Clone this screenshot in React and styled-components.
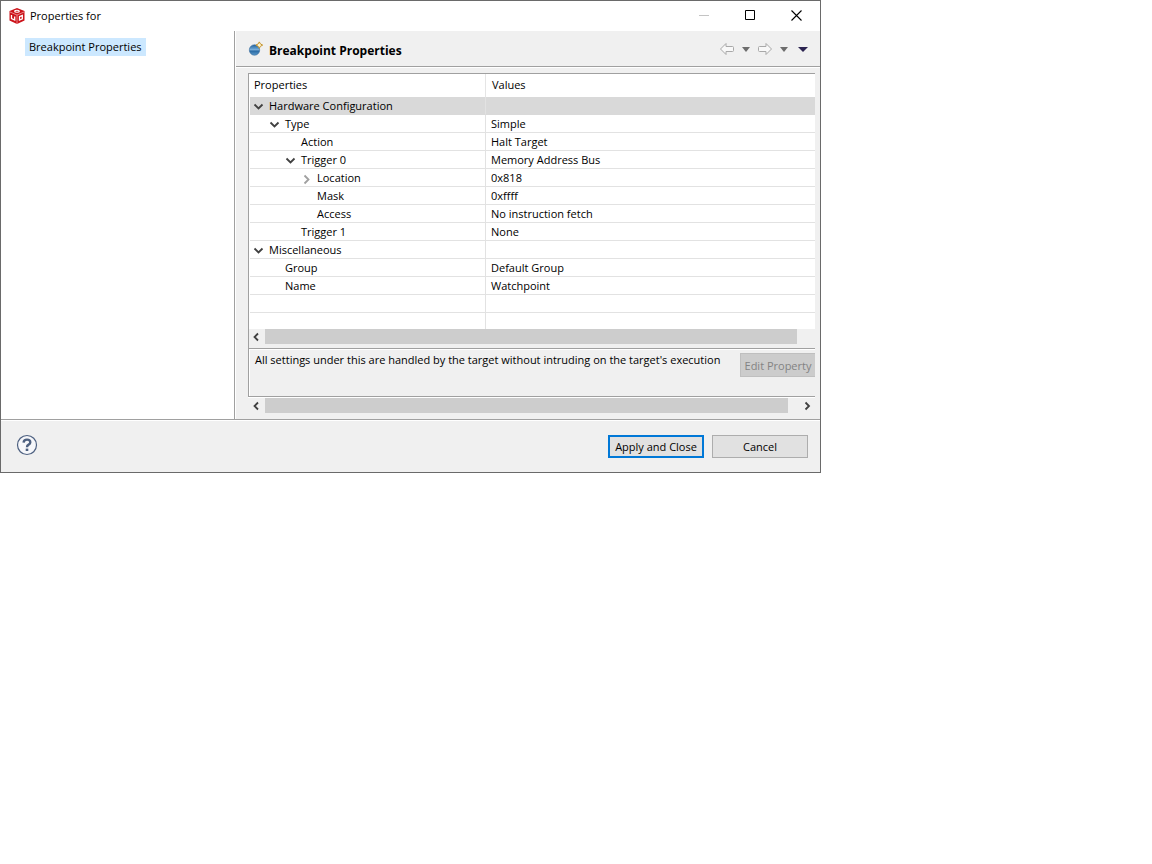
import { useState } from 'react';
import styled, { createGlobalStyle, css } from 'styled-components';

const GlobalStyle = createGlobalStyle`
  *, *::before, *::after {
    box-sizing: border-box;
  }

  body {
    margin: 0;
    background: #fff;
    color: #000;
    font-family: 'Open Sans', 'Noto Sans', sans-serif;
    font-size: 11px;
    line-height: 16px;
  }

  button {
    font: inherit;
    color: inherit;
  }
`;

const Dialog = styled.div`
  display: flex;
  flex-direction: column;
  width: 100%;
  max-width: 821px;
  background: #fff;
  border: 1px solid #6a6a6a;
`;

const TitleBar = styled.header`
  display: flex;
  align-items: center;
  height: 30px;
  padding-left: 8px;
`;

const WindowTitle = styled.h1`
  flex: 1;
  margin: 0 0 0 5px;
  font-size: 11px;
  font-weight: 400;
`;

const IconButton = styled.button`
  display: flex;
  align-items: center;
  justify-content: center;
  flex: none;
  width: ${({ $width }) => $width || 16}px;
  height: ${({ $height }) => $height || 16}px;
  padding: 0;
  border: 0;
  background: none;

  svg {
    display: block;
  }
`;

const WindowButton = styled(IconButton)`
  width: 46px;
  height: 29px;
  padding-right: 1px;
  align-self: flex-start;
`;

const Body = styled.div`
  display: flex;
`;

const Sidebar = styled.nav`
  flex: none;
  width: 234px;
  padding: 7px 0 0 24px;
  border-right: 1px solid #a0a0a0;
`;

const SidebarItem = styled.button`
  height: 18px;
  padding: 0 4px;
  border: 0;
  background: #cce8ff;
  white-space: nowrap;
`;

const Main = styled.main`
  flex: 1;
  min-width: 0;
  margin-left: 1px;
  background: #f0f0f0;
`;

const PageHeader = styled.div`
  display: flex;
  align-items: center;
  height: 37px;
  padding: 0 9px 0 12px;
  border-bottom: 1px solid #fff;
  box-shadow: inset 0 -1px #a0a0a0;
`;

const PageTitle = styled.h2`
  flex: 1;
  margin: 4px 0 0 5px;
  font-size: 12px;
  font-weight: 700;
`;

const Content = styled.div`
  padding: 5px 5px 6px 12px;
`;

const Panel = styled.section`
  margin-bottom: 1px;
  border: solid #a0a0a0;
  border-width: 1px 0 1px 1px;
  box-shadow: 0 1px #fff;
`;

const PropertyTable = styled.table`
  width: 100%;
  table-layout: fixed;
  border-collapse: separate;
  border-spacing: 0;
  border-left: 1px solid #fff;
  background: #fff;
`;

const HeadCell = styled.th`
  width: ${({ $width }) => ($width ? `${$width}px` : 'auto')};
  height: 23px;
  padding: 0 0 2px ${({ $first }) => ($first ? 4 : 6)}px;
  border-right: ${({ $first }) => ($first ? '1px solid #e5e5e5' : '0')};
  font-weight: 400;
  text-align: left;
`;

const Cell = styled.td`
  height: 18px;
  padding: 0 0 0 5px;
  border-bottom: 1px solid #e2e2e2;
  line-height: 17px;
  white-space: nowrap;

  &:first-child {
    padding-left: ${({ $level }) => ($level || 0) * 16}px;
    border-right: 1px solid #e2e2e2;
  }
`;

const Row = styled.tr`
  ${({ $selected }) =>
    $selected &&
    css`
      background: #d9d9d9;

      ${Cell} {
        border-bottom-color: #d9d9d9;
      }
    `}

  &:last-child ${Cell} {
    height: 16px;
    border-bottom: 0;
  }
`;

const PropertyName = styled.div`
  display: flex;
  align-items: center;
  gap: 3px;
  height: 17px;
`;

const Indent = styled.span`
  width: 16px;
`;

const ScrollBar = styled.div`
  display: flex;
  height: 15px;
  background: #f0f0f0;
`;

const Thumb = styled.div`
  flex: 1;
  margin-right: ${({ $gap }) => $gap}px;
  background: #cdcdcd;
`;

const Description = styled.div`
  display: flex;
  align-items: flex-start;
  justify-content: space-between;
  min-height: 48px;
  margin-top: 4px;
  padding: 3px 0 0 6px;
  border-top: 1px solid #a0a0a0;
  box-shadow: inset 1px 1px #fff;
`;

const DescriptionText = styled.p`
  margin: 0;
  white-space: nowrap;
`;

const Button = styled.button`
  width: 96px;
  height: 23px;
  padding: 1px 0 0;
  border: ${({ $primary }) => ($primary ? '2px solid #0078d7' : '1px solid #adadad')};
  background: #e1e1e1;
  white-space: nowrap;
`;

const EditButton = styled(Button)`
  flex: none;
  width: 75px;
  height: 24px;
  margin-top: 1px;
  border-color: #bfbfbf;
  border-right: 0;
  background: #cccccc;
  color: #838383;
`;

const Footer = styled.footer`
  display: flex;
  align-items: center;
  gap: 8px;
  height: 53px;
  padding: 0 12px 0 15px;
  border-top: 1px solid #a0a0a0;
  background: #f0f0f0;
  box-shadow: inset 0 1px #fff;
`;

const HelpButton = styled(IconButton)`
  width: 22px;
  height: 22px;
  margin-bottom: 2px;
`;

const Spacer = styled.div`
  flex: 1;
`;

const CubeIcon = () => (
  <svg width='16' height='16' viewBox='0 0 16 16'>
    <path d='M8 0 15.500 3v9.500L8 16 .5 12.500V3z' fill='#cc1219' />
    <path d='M1 4l7 3 7-3M8 7v9' fill='none' stroke='#f3b6b8' strokeWidth='.7' />
    <ellipse cx='8' cy='3.300' rx='2.400' ry='1' fill='none' stroke='#fff' strokeWidth='1.100' />
    <path d='M2.500 7v3.500l3.200 1.500V8.500' fill='none' stroke='#fff' strokeWidth='1.300' />
    <path d='M10.500 8.700l2.800-1.200v3.300L10.500 12z' fill='none' stroke='#fff' strokeWidth='1.300' />
  </svg>
);

const BreakpointIcon = () => (
  <svg width='16' height='16' viewBox='0 0 16 16'>
    <defs>
      <linearGradient id='ball' x1='0' y1='0' x2='0' y2='1'>
        <stop offset='0' stopColor='#24629b' />
        <stop offset='0.350' stopColor='#5b98cb' />
        <stop offset='0.500' stopColor='#86b6dc' />
        <stop offset='0.580' stopColor='#2667a2' />
        <stop offset='1' stopColor='#5c9acb' />
      </linearGradient>
    </defs>
    <circle cx='6.500' cy='9' r='5.200' fill='url(#ball)' stroke='#35699a' strokeWidth='.6' />
    <path
      d='M11.300.9l1.100 2 2.300 1.200-2.300 1.200-1.100 2-1.100-2-2.300-1.200 2.300-1.200z'
      fill='#fff6d0'
      stroke='#c4922c'
      strokeWidth='1'
    />
  </svg>
);

const Chevron = ({ d, color = '#404040' }) => (
  <svg width='16' height='16' viewBox='0 0 16 16' fill='none' stroke={color} strokeWidth='1.800'>
    <path d={d} />
  </svg>
);

const HistoryArrow = ({ flip }) => (
  <svg width='16' height='14' viewBox='0 0 16 14'>
    <path
      d={
        flip
          ? 'M14.500 7 9 1.500v3H2.500q-1 0-1 1v3q0 1 1 1H9v3z'
          : 'M1.500 7 7 1.500v3h6.500q1 0 1 1v3q0 1-1 1H7v3z'
      }
      fill='#f8f8f8'
      stroke='#a8a8a8'
      strokeLinejoin='round'
    />
  </svg>
);

const Caret = ({ color = '#6d6d6d', size = 8 }) => (
  <svg width={size} height='5' viewBox='0 0 8 5' preserveAspectRatio='none'>
    <path d='M0 0h8L4 5z' fill={color} />
  </svg>
);

const rows = [
  { name: 'Hardware Configuration', value: '', level: 0, open: true },
  { name: 'Type', value: 'Simple', level: 1, open: true },
  { name: 'Action', value: 'Halt Target', level: 2 },
  { name: 'Trigger 0', value: 'Memory Address Bus', level: 2, open: true },
  { name: 'Location', value: '0x818', level: 3, open: false },
  { name: 'Mask', value: '0xffff', level: 3 },
  { name: 'Access', value: 'No instruction fetch', level: 3 },
  { name: 'Trigger 1', value: 'None', level: 2 },
  { name: 'Miscellaneous', value: '', level: 0, open: true },
  { name: 'Group', value: 'Default Group', level: 1 },
  { name: 'Name', value: 'Watchpoint', level: 1 },
];

const PropertyRow = ({ row, selected, onSelect }) => (
  <Row $selected={selected} onClick={onSelect}>
    <Cell $level={row.level}>
      <PropertyName>
        {row.open === undefined ? (
          <Indent />
        ) : (
          <IconButton aria-label={`Toggle ${row.name}`} aria-expanded={row.open}>
            {row.open ? (
              <Chevron d='M4.500 6.500l4 4 4-4' />
            ) : (
              <Chevron d='M6.500 5.500l4 4-4 4' color='#a0a0a0' />
            )}
          </IconButton>
        )}
        {row.name}
      </PropertyName>
    </Cell>
    <Cell>{row.value}</Cell>
  </Row>
);

const App = () => {
  const [selected, setSelected] = useState(0);

  return (
    <>
      <GlobalStyle />
      <Dialog role='dialog' aria-labelledby='window-title'>
        <TitleBar>
          <CubeIcon />
          <WindowTitle id='window-title'>Properties for</WindowTitle>
          <WindowButton aria-label='Minimize' disabled>
            <svg width='11' height='11' viewBox='0 0 11 11' stroke='#c4c4c4'>
              <path d='M0 5.500h10' />
            </svg>
          </WindowButton>
          <WindowButton aria-label='Maximize'>
            <svg width='11' height='11' viewBox='0 0 11 11' fill='none' stroke='#000'>
              <path d='M.5.5h9v9h-9z' />
            </svg>
          </WindowButton>
          <WindowButton aria-label='Close'>
            <svg width='11' height='11' viewBox='0 0 11 11' stroke='#000' strokeWidth='1.100'>
              <path d='M.5.5l10 10M10.500.5l-10 10' />
            </svg>
          </WindowButton>
        </TitleBar>
        <Body>
          <Sidebar>
            <SidebarItem>Breakpoint Properties</SidebarItem>
          </Sidebar>
          <Main>
            <PageHeader>
              <BreakpointIcon />
              <PageTitle>Breakpoint Properties</PageTitle>
              <IconButton aria-label='Back'>
                <HistoryArrow />
              </IconButton>
              <IconButton $width={22} aria-label='Back history'>
                <Caret />
              </IconButton>
              <IconButton aria-label='Forward'>
                <HistoryArrow flip />
              </IconButton>
              <IconButton $width={22} aria-label='Forward history'>
                <Caret />
              </IconButton>
              <IconButton aria-label='View menu'>
                <Caret color='#2b2350' size={10} />
              </IconButton>
            </PageHeader>
            <Content>
              <Panel>
                <PropertyTable>
                  <thead>
                    <tr>
                      <HeadCell $width={236} $first>
                        Properties
                      </HeadCell>
                      <HeadCell>Values</HeadCell>
                    </tr>
                  </thead>
                  <tbody>
                    {rows.map((row, index) => (
                      <PropertyRow
                        key={row.name}
                        row={row}
                        selected={index === selected}
                        onSelect={() => setSelected(index)}
                      />
                    ))}
                    <Row>
                      <Cell />
                      <Cell />
                    </Row>
                    <Row>
                      <Cell />
                      <Cell />
                    </Row>
                  </tbody>
                </PropertyTable>
                <ScrollBar>
                  <IconButton aria-label='Scroll table left'>
                    <Chevron d='M9 4.500l-3.500 3.500 3.500 3.500' />
                  </IconButton>
                  <Thumb $gap={18} />
                </ScrollBar>
                <Description>
                  <DescriptionText>
                    All settings under this are handled by the target without intruding on the
                    target's execution
                  </DescriptionText>
                  <EditButton disabled>Edit Property</EditButton>
                </Description>
              </Panel>
              <ScrollBar>
                <IconButton $width={17} aria-label='Scroll page left'>
                  <Chevron d='M9 4.500l-3.500 3.500 3.500 3.500' />
                </IconButton>
                <Thumb $gap={10} />
                <IconButton $width={17} aria-label='Scroll page right'>
                  <Chevron d='M6.500 4.500l3.500 3.500-3.500 3.500' />
                </IconButton>
              </ScrollBar>
            </Content>
          </Main>
        </Body>
        <Footer>
          <HelpButton aria-label='Help'>
            <svg width='22' height='22' viewBox='0 0 22 22' fill='none' stroke='#4d6080'>
              <circle cx='11' cy='11' r='9.500' fill='#f6f7fa' strokeWidth='1.200' />
              <path d='M7.600 8.600q.2-3 3.400-3t3.300 2.600q0 1.500-1.700 2.400T11 13.300' strokeWidth='2.400' />
              <path d='M11 14.600v2.400' strokeWidth='2.600' />
            </svg>
          </HelpButton>
          <Spacer />
          <Button $primary>Apply and Close</Button>
          <Button>Cancel</Button>
        </Footer>
      </Dialog>
    </>
  );
};

export default App;
